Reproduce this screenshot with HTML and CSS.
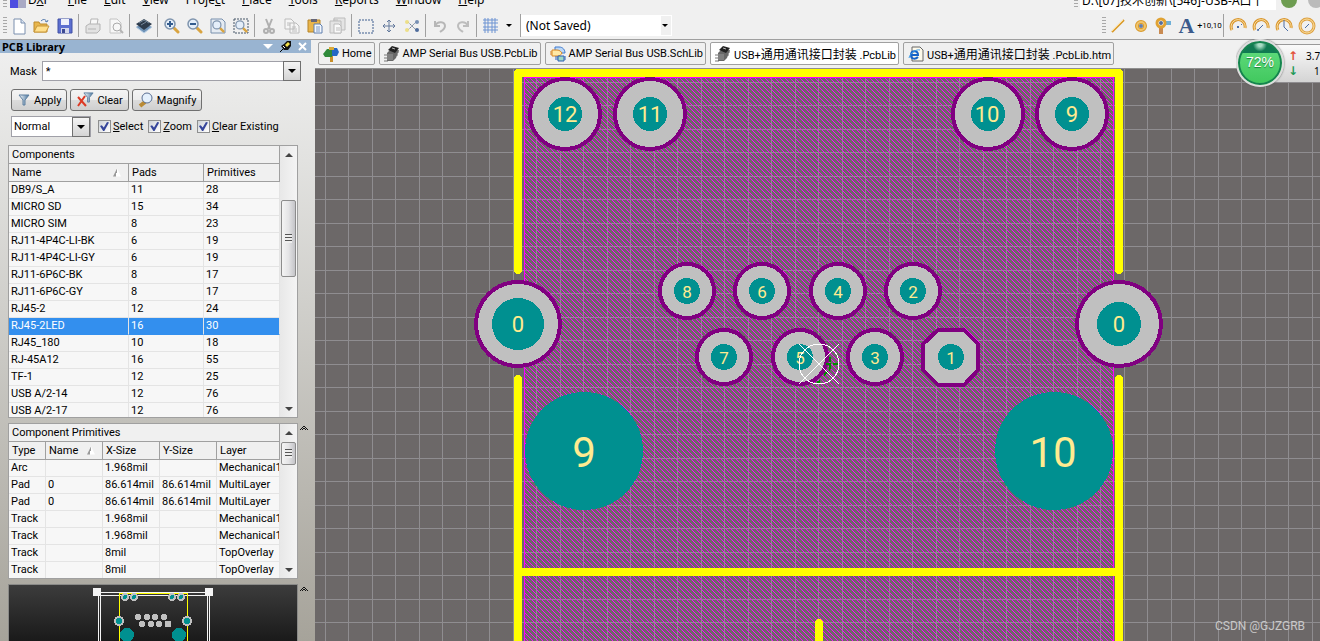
FILE: index.html
```html
<!DOCTYPE html>
<html lang="en">
  <head>
    <meta charset="UTF-8" />
    <meta name="viewport" content="width=device-width, initial-scale=1.0" />
    <title>PCB Library</title>
    <link rel="stylesheet" href="styles.css">
  </head>
  <body>
    <!-- shared icons -->
    <svg class="defs" width="0" height="0" aria-hidden="true">
      <defs>
        <linearGradient id="funnelFill"><stop offset="0" stop-color="#fff"/><stop offset="1" stop-color="#42719c"/></linearGradient>
        <symbol id="chip" viewBox="0 0 16 16">
          <path d="M0 9h4M0 12h4M0 15h4M12 6h3M11 9h3" stroke="#777" stroke-width="1"/>
          <path d="M3 7l4-4 8 1-3 8-3 3H3z" fill="#686868"/>
          <path d="M4 4l4-4 7 2-4 5z" fill="#222"/>
          <path d="M3 8h6v6H3z" fill="#808080"/>
          <path d="M8 2l3 1" stroke="#bbb"/>
        </symbol>
        <symbol id="lens" viewBox="0 0 16 16">
          <path d="M9 9l5 5" stroke="#d9a441" stroke-width="3" stroke-linecap="round"/>
          <circle cx="6" cy="6" r="5" fill="#e4eef9" stroke="#7f94ad" stroke-width="1.5"/>
        </symbol>
        <symbol id="funnel" viewBox="0 0 12 12">
          <path d="M1 1h10L7 6v5H5V6z" fill="url(#funnelFill)" stroke="#5d7f9f"/>
        </symbol>
        <symbol id="arc" viewBox="0 0 18 18">
          <path d="M3 13A7 7 0 1 1 16 11" fill="none" stroke="#d9962f" stroke-width="3"/>
          <path d="M3 13A7 7 0 1 1 16 11" fill="none" stroke="#fce0a0" stroke-width="1"/>
        </symbol>
      </defs>
    </svg>

    <header>
      <nav class="menu">
        <span class="grip"></span>
        <svg class="logo" width="16" height="16"><path d="M0 0h8v16H0z" fill="#4d4de0"/><path d="M8 0h8v16H8z" fill="#a9a9c4"/></svg>
        <a href="#">D<u>X</u>P</a>
        <a href="#"><u>F</u>ile</a>
        <a href="#"><u>E</u>dit</a>
        <a href="#"><u>V</u>iew</a>
        <a href="#">Proje<u>c</u>t</a>
        <a href="#"><u>P</u>lace</a>
        <a href="#"><u>T</u>ools</a>
        <a href="#"><u>R</u>eports</a>
        <a href="#"><u>W</u>indow</a>
        <a href="#"><u>H</u>elp</a>
        <span class="grip right"></span>
        <input class="path" type="text" aria-label="Path" value="D:\[07]技术创新\[546]-USB-A口十">
        <span class="round green"></span>
        <span class="round"></span>
      </nav>

      <div class="toolbar">
        <span class="grip"></span>
        <button aria-label="New"><svg width="16" height="18"><path d="M3 2h7l4 4v11H3z" fill="#fff" stroke="#7b8fae"/><path d="M10 2v4h4" fill="#dbe5f2" stroke="#7b8fae"/></svg></button>
        <button aria-label="Open"><svg width="17" height="16"><path d="M1 14V4h5l1 2h7v8z" fill="#e8b64c" stroke="#bd8a2c"/><path d="M1 14l3-6h12l-3 6z" fill="#ffdf8c" stroke="#c8973a"/><path d="M8 3c3-3 5-1 6 1l1-2M14 4l-2-1" fill="none" stroke="#5d80b0"/></svg></button>
        <button aria-label="Save"><svg width="16" height="16"><path d="M1 1h14v14H1z" fill="#5c6fd0" stroke="#4050a4"/><path d="M4 1h8v6H4z" fill="#eef1fb"/><path d="M4 10h8v5H4z" fill="#d4d8ec"/><path d="M5 11h3v4H5z" fill="#3c4a94"/></svg></button>
        <span class="sep"></span>
        <button aria-label="Print"><svg width="16" height="16" stroke="#b4b4b4" fill="#e2e2e2"><path d="M5 7l1-6h7l-1 6z" fill="#f8f8f8"/><path d="M1 8l3-2h11v6l-3 3H1z"/><path d="M3 11h8" /></svg></button>
        <button aria-label="Preview"><svg width="16" height="16" fill="#f7f7f7" stroke="#c4c4c4"><path d="M2 1h7l4 4v10H2z"/><circle cx="9" cy="9" r="4" stroke="#aaa"/><path d="M12 12l3 3" stroke="#b4b4b4" stroke-width="2"/></svg></button>
        <span class="sep"></span>
        <button aria-label="Layers"><svg width="18" height="16"><path d="M1 9l8 6 8-6-8-4z" fill="#6f93b8"/><path d="M1 6l8 6 8-6-8-5z" fill="#2d3b4c"/><path d="M4 5l5-3 5 3M6 7l5-3" fill="none" stroke="#75889c"/><path d="M1 9l8 6 8-6" fill="none" stroke="#b9cfe4"/></svg></button>
        <span class="sep"></span>
        <button aria-label="Zoom in"><svg width="16" height="16"><use href="#lens"/><path d="M3 6h6M6 3v6" stroke="#335c8e" stroke-width="2"/></svg></button>
        <button aria-label="Zoom out"><svg width="16" height="16"><use href="#lens"/><path d="M3 6h6" stroke="#335c8e" stroke-width="2"/></svg></button>
        <button aria-label="Fit document"><svg width="16" height="16"><path d="M1 1h11l3 3v11H1z" fill="#e5ebf2" stroke="#7890ad"/><use href="#lens" x="2" y="2" width="13" height="13"/></svg></button>
        <button aria-label="Zoom area"><svg width="16" height="16"><path d="M1 1h14v14H1z" fill="none" stroke="#456" stroke-dasharray="2 1"/><use href="#lens" x="2" y="2" width="13" height="13"/></svg></button>
        <span class="sep"></span>
        <button aria-label="Cut"><svg width="16" height="16" fill="none" stroke="#b0b0b0" stroke-width="2"><path d="M5 1l4 10M11 1L7 11"/><circle cx="5" cy="13" r="2"/><circle cx="11" cy="13" r="2"/></svg></button>
        <button aria-label="Copy"><svg width="16" height="16" fill="#f5f5f5" stroke="#bcbcbc"><path d="M1 1h6l3 3v7H1zM6 5h6l3 3v7H6z"/><path d="M8 9h4M8 11h5M8 13h5M3 5h3M3 7h3"/></svg></button>
        <button aria-label="Paste"><svg width="16" height="16"><path d="M1 2h12v12H1z" fill="#e9b54b" stroke="#b58329"/><path d="M4 1h6v3H4z" fill="#667"/><path d="M7 6h6l2 2v7H7z" fill="#f3f7fd" stroke="#5e7fae"/><path d="M9 9h4M9 11h4M9 13h4" stroke="#7c9ac5"/></svg></button>
        <button aria-label="Rubber stamp"><svg width="17" height="17" fill="#e4e4e4" stroke="#bcbcbc"><path d="M5 1h11v12H5z"/><path d="M1 4h11v12H1z"/><path d="M5 7h5l2 2v7H5z" fill="#fafafa"/><path d="M4 3h5M7 11h4M7 13h4"/></svg></button>
        <span class="sep"></span>
        <button aria-label="Select area"><svg width="16" height="16"><path d="M1 2h14v13H1z" fill="none" stroke="#3f5f8f" stroke-dasharray="2 1"/></svg></button>
        <button aria-label="Move"><svg width="14" height="14" fill="none" stroke="#647a9d"><path d="M7 1v12M1 7h12M5 3l2-2 2 2M5 11l2 2 2-2M3 5L1 7l2 2M11 5l2 2-2 2"/></svg></button>
        <button aria-label="Deselect"><svg width="16" height="14"><path d="M4 3l8 8M4 11l8-8" stroke="#68778f" stroke-dasharray="2 1"/><circle cx="3" cy="3" r="2" fill="#eddf88"/><circle cx="3" cy="11" r="2" fill="#eddf88"/><circle cx="13" cy="3" r="2" fill="#7890b4"/><circle cx="13" cy="11" r="2" fill="#4e6c9c"/></svg></button>
        <span class="sep"></span>
        <button aria-label="Undo"><svg width="14" height="14" fill="none" stroke="#b7b7b7" stroke-width="2"><path d="M2 2v5h5M2 7c3-6 10-4 10 0 0 3-2 4-5 6"/></svg></button>
        <button aria-label="Redo"><svg width="14" height="14" fill="none" stroke="#bdbdbd" stroke-width="2"><path d="M12 2v5H7M12 7C9 1 2 3 2 7c0 3 2 4 5 6"/></svg></button>
        <span class="sep"></span>
        <button aria-label="Grid"><svg width="15" height="15" stroke="#6d93d2"><path d="M2 0v15M5 0v15M9 0v15M12 0v15M0 2h15M0 5h15M0 9h15M0 12h15"/></svg></button>
        <span class="caret"></span>
        <span class="sep wide"></span>
        <span class="saved"><select aria-label="Saved view"><option>(Not Saved)</option></select><span class="caret"></span></span>

        <span class="grip right"></span>
        <button aria-label="Line"><svg width="14" height="14"><path d="M1 13L13 1" stroke="#d99a2b" stroke-width="2"/><path d="M1 12L12 1" stroke="#ffe09a"/></svg></button>
        <button aria-label="Pad"><svg width="14" height="14"><circle cx="7" cy="7" r="4" fill="#fff" stroke="#d99a2b" stroke-width="4"/><circle cx="7" cy="7" r="4" fill="none" stroke="#f0c46c" stroke-width="2"/><circle cx="7" cy="7" r="2" fill="#667eaa"/></svg></button>
        <button aria-label="Via"><svg width="17" height="18"><path d="M8 6h8" stroke="#6fb0d8" stroke-width="4"/><path d="M6 10v7" stroke="#c98b52" stroke-width="4"/><circle cx="6" cy="6" r="4" fill="#fff" stroke="#e0a233" stroke-width="3"/><circle cx="6" cy="6" r="2" fill="#556d99"/></svg></button>
        <button class="letter" aria-label="String">A</button>
        <button class="coord" aria-label="Coordinate">+<sup>10,10</sup></button>
        <span class="sep"></span>
        <button aria-label="Arc by centre"><svg width="18" height="18"><use href="#arc"/><path d="M8 9h2v2H8zM12 7h1v1h-1z" fill="#4b6da5"/></svg></button>
        <button aria-label="Arc by edge"><svg width="18" height="18"><use href="#arc"/><path d="M6 13l5-5" stroke="#4b6da5"/><circle cx="6" cy="13" r="1" fill="#4b6da5"/></svg></button>
        <button aria-label="Arc any angle"><svg width="18" height="18"><use href="#arc"/><path d="M9 3v7l4 4" fill="none" stroke="#4b6da5"/></svg></button>
        <button aria-label="Full circle"><svg width="18" height="18"><circle cx="9" cy="9" r="7" fill="none" stroke="#dda040" stroke-width="3"/><circle cx="9" cy="9" r="7" fill="none" stroke="#fce0a0"/><path d="M7 11l4-4" stroke="#4b6da5"/></svg></button>
      </div>
    </header>

    <div class="workspace">
      <aside>
        <div class="panelTitle">
          <h1>PCB Library</h1>
          <button aria-label="Menu"><svg width="10" height="6"><path d="M0 0h10L5 5z" fill="#fff"/></svg></button>
          <button aria-label="Pin"><svg width="11" height="11"><path d="M0 11l4-4" stroke="#000"/><path d="M1 5l3-2 3-3h4v5L8 9H4z" fill="#111"/><path d="M5 4l3-3 2 2-3 3z" fill="#f4e14d"/><path d="M3 5l2 2" stroke="#fff"/></svg></button>
          <button aria-label="Close"><svg width="9" height="9"><path d="M1 1l7 7M8 1L1 8" stroke="#fff" stroke-width="2"/></svg></button>
        </div>

        <div class="controls">
          <div class="mask">
            <label for="mask">Mask</label>
            <input id="mask" type="text" value="*">
            <button class="drop" aria-label="Masks"><span class="caret"></span></button>
          </div>
          <div class="buttons">
            <button><svg width="14" height="14"><use href="#funnel" x="1" y="1" width="12" height="12"/></svg>Apply</button>
            <button><svg width="18" height="16"><use href="#funnel" x="7" y="0" width="11" height="11"/><path d="M2 5l8 9M9 4L2 14" stroke="#dc3a25" stroke-width="2"/></svg>Clear</button>
            <button><svg width="16" height="16"><path d="M7 10l-5 4" stroke="#b98a35" stroke-width="4"/><circle cx="9" cy="6" r="5" fill="#e4f0fc" stroke="#5b6f92"/></svg>Magnify</button>
          </div>
          <div class="options">
            <span class="mode"><select aria-label="Mode"><option>Normal</option></select><span class="drop"><span class="caret"></span></span></span>
            <label><input type="checkbox" checked><span><u>S</u>elect</span></label>
            <label><input type="checkbox" checked><span><u>Z</u>oom</span></label>
            <label><input type="checkbox" checked><span><u>C</u>lear Existing</span></label>
          </div>
        </div>

        <section class="list components">
          <div class="listBody">
            <table>
              <caption>Components</caption>
              <colgroup><col class="c120"><col class="c75"><col></colgroup>
              <thead><tr><th><span class="sort">Name <i></i></span></th><th>Pads</th><th>Primitives</th></tr></thead>
              <tbody>
                <tr><td>DB9/S_A</td><td>11</td><td>28</td></tr>
                <tr><td>MICRO SD</td><td>15</td><td>34</td></tr>
                <tr><td>MICRO SIM</td><td>8</td><td>23</td></tr>
                <tr><td>RJ11-4P4C-LI-BK</td><td>6</td><td>19</td></tr>
                <tr><td>RJ11-4P4C-LI-GY</td><td>6</td><td>19</td></tr>
                <tr><td>RJ11-6P6C-BK</td><td>8</td><td>17</td></tr>
                <tr><td>RJ11-6P6C-GY</td><td>8</td><td>17</td></tr>
                <tr><td>RJ45-2</td><td>12</td><td>24</td></tr>
                <tr class="selected"><td>RJ45-2LED</td><td>16</td><td>30</td></tr>
                <tr><td>RJ45_180</td><td>10</td><td>18</td></tr>
                <tr><td>RJ-45A12</td><td>16</td><td>55</td></tr>
                <tr><td>TF-1</td><td>12</td><td>25</td></tr>
                <tr><td>USB A/2-14</td><td>12</td><td>76</td></tr>
                <tr><td>USB A/2-17</td><td>12</td><td>76</td></tr>
              </tbody>
            </table>
          </div>
          <div class="scroll">
            <span class="up"></span>
            <span class="thumb"></span>
            <span class="down"></span>
          </div>
        </section>

        <div class="row">
          <section class="list primitives">
            <div class="listBody">
              <table>
                <caption>Component Primitives</caption>
                <colgroup><col class="c37"><col class="c57"><col class="c57"><col class="c57"><col></colgroup>
                <thead><tr><th>Type</th><th><span class="sort">Name <i></i></span></th><th>X-Size</th><th>Y-Size</th><th>Layer</th></tr></thead>
                <tbody>
                  <tr><td>Arc</td><td></td><td>1.968mil</td><td></td><td>Mechanical1</td></tr>
                  <tr><td>Pad</td><td>0</td><td>86.614mil</td><td>86.614mil</td><td>MultiLayer</td></tr>
                  <tr><td>Pad</td><td>0</td><td>86.614mil</td><td>86.614mil</td><td>MultiLayer</td></tr>
                  <tr><td>Track</td><td></td><td>1.968mil</td><td></td><td>Mechanical1</td></tr>
                  <tr><td>Track</td><td></td><td>1.968mil</td><td></td><td>Mechanical1</td></tr>
                  <tr><td>Track</td><td></td><td>8mil</td><td></td><td>TopOverlay</td></tr>
                  <tr><td>Track</td><td></td><td>8mil</td><td></td><td>TopOverlay</td></tr>
                </tbody>
              </table>
            </div>
            <div class="scroll">
              <span class="up"></span>
              <span class="thumb"></span>
              <span class="down"></span>
            </div>
          </section>
          <svg class="fold" width="9" height="6"><path d="M0 5l4-4 4 4M2 5l2-2 2 2" fill="none" stroke="#111"/></svg>
        </div>

        <div class="row grow">
          <div class="preview">
            <svg width="288" height="56" viewBox="9 585 288 56" shape-rendering="crispEdges">
              <path d="M98 593h1v48h-1zM100 595h1v46h-1zM207 595h1v46h-1zM209 593h1v48h-1zM98 592h112v1H98zM100 595h108v1H100z" fill="#f4f4f4"/>
              <path d="M93 588h8v8h-8zM205 588h8v8h-8z" fill="#f4f4f4"/>
              <path d="M119 593h69v1h-69zM119 594h1v47h-1zM187 594h1v47h-1z" fill="#ff0"/>
              <g fill="#009090" stroke="#c0c0c0" stroke-width="2">
                <circle cx="125" cy="597" r="3"/><circle cx="134" cy="597" r="3"/>
                <circle cx="172" cy="597" r="3"/><circle cx="181" cy="597" r="3"/>
                <circle cx="119" cy="621" r="4"/><circle cx="187" cy="621" r="4"/>
              </g>
              <g fill="#c0c0c0">
                <circle cx="138" cy="617" r="3"/><circle cx="147" cy="617" r="3"/><circle cx="155" cy="617" r="3"/><circle cx="164" cy="617" r="3"/>
                <circle cx="142" cy="624" r="3"/><circle cx="151" cy="624" r="3"/><circle cx="159" cy="624" r="3"/><path d="M165 621h6v6h-6z"/>
              </g>
              <circle cx="127" cy="635" r="7" fill="#009090"/><circle cx="179" cy="635" r="7" fill="#009090"/>
            </svg>
          </div>
          <svg class="fold" width="9" height="6"><path d="M0 5l4-4 4 4M2 5l2-2 2 2" fill="none" stroke="#111"/></svg>
        </div>
      </aside>

      <main>
        <nav class="tabs">
          <a href="#"><svg width="16" height="16"><path d="M7 3h3v13H7z" fill="#c98f28"/><path d="M7 2h7l2 4-2 4H8z" fill="#2467c4"/><path d="M0 8l4-5h5v8H2z" fill="#2f8a3b"/><path d="M6 1h5v3H6z" fill="#d9a93a"/></svg>Home</a>
          <a href="#"><svg width="16" height="16"><use href="#chip"/></svg>AMP Serial Bus USB.PcbLib</a>
          <a href="#"><svg width="16" height="16"><path d="M5 1h4c4 0 6 3 6 6H5z" fill="#bcd8f6" stroke="#3c78cf"/><path d="M2 4h5c3 0 4 2 5 3-1 2-2 3-5 3H2z" fill="#ffe9a6" stroke="#d98723"/><path d="M0 6h2M0 8h2" stroke="#d98723"/><path d="M8 10h6v5H8z" fill="#9ed8c4" stroke="#2b5fb4"/><path d="M5 11h3M5 13h3M14 11h2M14 13h2" stroke="#2b5fb4"/></svg>AMP Serial Bus USB.SchLib</a>
          <a href="#" class="active"><svg width="16" height="16"><use href="#chip"/></svg><span>USB+<b>通用通讯接口封装</b> .PcbLib</span></a>
          <a href="#"><svg width="16" height="16"><path d="M4 1h8l3 3v11H4z" fill="#fdf9ea" stroke="#666"/><path d="M3 9h7c0-5-7-5-7 0s5 4 7 2" fill="none" stroke="#1763c8" stroke-width="2"/><path d="M1 12C2 7 8 3 12 4" fill="none" stroke="#3d9be8"/></svg><span>USB+<b>通用通讯接口封装</b> .PcbLib.htm</span></a>
        </nav>

        <svg class="board" viewBox="315 69 1005 572" preserveAspectRatio="xMinYMin slice" shape-rendering="crispEdges">
          <defs>
            <pattern id="grid" x="818" y="364" width="47" height="47" patternUnits="userSpaceOnUse">
              <path d="M0 0h1v47H0zM24 0h1v47h-1zM0 0h47v1H0zM0 23h47v1H0z" fill="#8f8d90"/>
            </pattern>
            <pattern id="hatch" x="524" y="77" width="5" height="5" patternUnits="userSpaceOnUse">
              <path d="M0 0h1v1H0zM1 1h1v1H1zM2 2h1v1H2zM3 3h1v1H3zM4 4h1v1H4z" fill="#f0f"/>
            </pattern>
          </defs>
          <rect x="315" y="69" width="1005" height="572" fill="#6c6868"/>
          <rect x="315" y="69" width="1005" height="572" fill="url(#grid)"/>
          <rect x="524" y="77" width="590" height="564" fill="url(#hatch)"/>
          <path d="M524 77h590v1H524zM524 78h1v563h-1zM1113 78h1v563h-1z" fill="#f0f"/>

          <!-- overlay tracks -->
          <g fill="none" stroke="#ff0" stroke-width="8" stroke-linecap="round" stroke-linejoin="round">
            <path d="M518 270V73H1119V270"/>
            <path d="M518 650V379M1119 650V379M518 572H1119M819 650V623"/>
          </g>

          <!-- pads -->
          <g fill="#c0c0c0" stroke="#800080" stroke-width="4">
            <circle cx="565" cy="114" r="35"/><circle cx="650" cy="114" r="35"/><circle cx="988" cy="114" r="35"/><circle cx="1072" cy="114" r="35"/>
            <circle cx="518" cy="324" r="42"/><circle cx="1119" cy="324" r="42"/>
            <circle cx="687" cy="291" r="27"/><circle cx="762" cy="291" r="27"/><circle cx="838" cy="291" r="27"/><circle cx="913" cy="291" r="27"/>
            <circle cx="724" cy="357" r="27"/><circle cx="800" cy="357" r="27"/><circle cx="875" cy="357" r="27"/>
            <path d="M938 330h26l14 14v26l-14 15h-26l-15-15v-26z"/>
          </g>
          <g fill="#009090">
            <circle cx="565" cy="114" r="17"/><circle cx="650" cy="114" r="17"/><circle cx="988" cy="114" r="17"/><circle cx="1072" cy="114" r="17"/>
            <circle cx="518" cy="324" r="26"/><circle cx="1119" cy="324" r="22"/>
            <circle cx="687" cy="291" r="13"/><circle cx="762" cy="291" r="13"/><circle cx="838" cy="291" r="13"/><circle cx="913" cy="291" r="13"/>
            <circle cx="724" cy="357" r="13"/><circle cx="800" cy="357" r="13"/><circle cx="875" cy="357" r="13"/><circle cx="951" cy="357" r="13"/>
            <circle cx="584" cy="451" r="59"/><circle cx="1054" cy="451" r="59"/>
          </g>
          <g class="medium">
            <text x="565" y="122">12</text><text x="650" y="122">11</text><text x="987" y="122">10</text><text x="1072" y="122">9</text>
            <text x="518" y="332">0</text><text x="1119" y="332">0</text>
          </g>
          <g class="small">
            <text x="687" y="298">8</text><text x="762" y="298">6</text><text x="838" y="298">4</text><text x="913" y="298">2</text>
            <text x="724" y="364">7</text><text x="800" y="364">5</text><text x="875" y="364">3</text><text x="951" y="364">1</text>
          </g>
          <g class="large">
            <text x="584" y="467">9</text><text x="1053" y="467">10</text>
          </g>

          <!-- origin marker -->
          <path d="M826 364h12M830 357v13M824 375l6-5M817 383l3-2" stroke="#080" stroke-width="2" stroke-dasharray="5 2" fill="none"/>
          <g fill="none" stroke="#fff">
            <circle cx="819" cy="364" r="20"/>
            <path d="M799 344l40 40M839 344l-40 40"/>
          </g>
        </svg>
        <p class="watermark">CSDN @GJZGRB</p>
      </main>
    </div>

    <!-- floating network monitor -->
    <div class="monitor">
      <div class="speeds">
        <span class="rise">↑</span><span>3.7</span>
        <span class="fall">↓</span><span class="slow">1</span>
      </div>
      <div class="ball">72%</div>
    </div>
  </body>
</html>
```
FILE: styles.css
```css
* {
  box-sizing: border-box;
}
body {
  margin: 0;
  height: 100vh;
  overflow: hidden;
  display: flex;
  flex-direction: column;
  background: #f0f0f0;
  color: #000;
  font-family: Roboto, "Liberation Sans", sans-serif;
  font-size: 11px;
}
button,
input,
select {
  font: inherit;
  color: inherit;
  margin: 0;
}
a {
  color: inherit;
  text-decoration: none;
}
button {
  padding: 0;
  border: 0;
  background: none;
}
svg {
  flex: none;
}
.defs {
  position: absolute;
}

/* menu and toolbar */
header {
  border-bottom: 1px solid #a0a0a0;
}
.menu,
.toolbar {
  display: flex;
  align-items: center;
}
.menu {
  height: 28px;
  margin-top: -16px;
  padding: 4px 0 0 3px;
  gap: 17px;
  font-family: "Noto Sans", "Noto Sans CJK SC", sans-serif;
  font-size: 12px;
  line-height: 16px;
}
.logo {
  margin: 0 -15px 0 -14px;
}
.grip {
  width: 4px;
  height: 18px;
  background: repeating-linear-gradient(#a8a8a8 0 1px, #f0f0f0 1px 3px);
}
.grip.right {
  margin-left: auto;
}
.path {
  width: 196px;
  height: 20px;
  margin-left: -15px;
  padding: 0 2px;
  border: 0;
  background: #fff;
}
.round {
  width: 16px;
  height: 16px;
  margin-right: -6px;
  border-radius: 50%;
  background: #bbb;
}
.round.green {
  margin-left: -12px;
  background: #6d9c50;
}
.round:last-child {
  margin-right: -4px;
}
.toolbar {
  height: 27px;
  padding: 0 2px 0 3px;
}
.toolbar button {
  width: 23px;
  height: 22px;
  display: flex;
  align-items: center;
  justify-content: center;
}
.sep {
  width: 1px;
  height: 23px;
  margin: 0 2px;
  background: #a0a0a0;
}
.caret {
  width: 0;
  border: 3px solid transparent;
  border-top-color: #000;
  border-bottom-width: 0;
}
.toolbar > .caret {
  margin-left: 4px;
}
.sep.wide {
  margin: 0 0 0 8px;
}
.saved {
  display: flex;
  align-items: center;
  width: 151px;
  height: 21px;
  background: linear-gradient(90deg, #fff 139px, #f0f0f0 139px);
  border: 1px solid #fff;
  font-family: "Noto Sans", sans-serif;
  font-size: 12px;
}
.saved select,
.mode select {
  appearance: none;
  flex: 1;
  min-width: 0;
  height: 100%;
  padding: 0 4px;
  border: 0;
  background: transparent;
}
.saved .caret {
  margin-right: 3px;
}
.toolbar .letter {
  color: #3b5b8c;
  font: bold 22px "Liberation Serif", serif;
}
.toolbar .coord {
  font-size: 9px;
}
.coord sup {
  font-size: 8px;
}

/* library panel */
.workspace {
  flex: 1;
  min-height: 0;
  display: flex;
}
aside {
  width: 315px;
  flex: none;
  display: flex;
  flex-direction: column;
  background: linear-gradient(#f0f0f0, #e2e2e0 20%, #a6a39a);
}
.panelTitle {
  display: flex;
  align-items: center;
  gap: 7px;
  height: 13px;
  margin-right: 4px;
  padding: 0 4px 0 2px;
  background: #99b4d1;
}
.panelTitle h1 {
  flex: 1;
  margin: 0;
  font: bold 11px/13px "Noto Sans", sans-serif;
}
.panelTitle button {
  display: flex;
}
.controls {
  display: flex;
  flex-direction: column;
  padding: 8px 14px 8px 10px;
}
.mask,
.buttons,
.options {
  display: flex;
  align-items: center;
}
.mask input {
  flex: 1;
  min-width: 0;
  height: 20px;
  margin-left: 5px;
  padding: 0 3px;
  border: 1px solid #a0a0a8;
  border-right: 0;
  background: #fff;
}
.drop,
.mask .drop {
  display: flex;
  align-items: center;
  justify-content: center;
  width: 18px;
  height: 20px;
  border: 1px solid #707070;
  background: linear-gradient(#f4f4f4, #d4d4d4);
}
.drop .caret {
  border-width: 4px 4px 0;
}
.buttons {
  gap: 3px;
  margin: 8px 0 5px 1px;
}
.buttons button {
  display: flex;
  align-items: center;
  gap: 3px;
  height: 22px;
  padding: 0 5px;
  border: 1px solid #707070;
  border-radius: 3px;
  background: linear-gradient(#f4f4f4, #ececec 50%, #dcdcdc 50%, #cfcfcf);
}
.options {
  height: 21px;
  gap: 5px;
}
.mode {
  display: flex;
  align-items: center;
  width: 80px;
  height: 21px;
  margin: 0 2px 0 1px;
  border: 1px solid #a0a0a8;
  background: #fff;
}
.mode select {
  padding: 0 2px;
}
.options label {
  display: flex;
  align-items: center;
  gap: 2px;
  white-space: nowrap;
}
.options input {
  appearance: none;
  width: 13px;
  height: 13px;
  border: 1px solid #8e8f8f;
  background: linear-gradient(135deg, #cfd3d8, #fff);
}
.options input:checked::before {
  content: "";
  display: block;
  width: 9px;
  height: 9px;
  margin: 1px;
  background: #35459b;
  clip-path: polygon(0 45%, 20% 35%, 42% 62%, 78% 0, 100% 5%, 48% 100%, 35% 100%);
}

/* lists */
.list {
  display: flex;
  width: 290px;
  border: 1px solid #a0a0a0;
  background: #f7f7f7;
  overflow: hidden;
}
.components {
  height: 273px;
  margin: 0 0 5px 8px;
}
.primitives {
  height: 156px;
}
.listBody {
  flex: 1;
  min-width: 0;
}
table {
  width: 100%;
  table-layout: fixed;
  border-collapse: separate;
  border-spacing: 0;
}
caption {
  height: 18px;
  padding: 0 3px;
  background: #f0f0f0;
  border-right: 1px solid #a0a0a0;
  border-bottom: 1px solid #a0a0a0;
  line-height: 17px;
  text-align: left;
}
.c120 {
  width: 120px;
}
.c75 {
  width: 75px;
}
.c37 {
  width: 37px;
}
.c57 {
  width: 57px;
}
th,
td {
  padding: 0 0 0 2px;
  text-align: left;
  font-weight: normal;
  white-space: nowrap;
  overflow: hidden;
}
th {
  height: 18px;
  padding: 0 3px;
  border-right: 1px solid #a0a0a0;
  border-bottom: 1px solid #a0a0a0;
  background: #f0f0f0;
  line-height: 17px;
}
td {
  height: 17px;
  border-right: 1px solid #e4e4e4;
  border-bottom: 1px solid #e4e4e4;
  line-height: 16px;
}
.sort {
  display: flex;
  align-items: center;
  justify-content: space-between;
}
.sort i {
  width: 8px;
  height: 8px;
  margin-right: 4px;
  background: linear-gradient(105deg, #999 45%, #fff 45%);
  clip-path: polygon(50% 0, 100% 100%, 0 100%);
}
.selected td {
  background: #338fee;
  border-bottom-color: #338fee;
  color: #fff;
}
.scroll {
  display: flex;
  flex-direction: column;
  align-items: center;
  width: 17px;
  background: linear-gradient(90deg, #e8e8e8, #f4f4f4);
}
.up,
.down {
  width: 0;
  border: 4px solid transparent;
}
.up {
  margin: 7px 0;
  border-top: 0;
  border-bottom-color: #444;
}
.down {
  margin: auto 0 6px;
  border-bottom: 0;
  border-top-color: #444;
}
.thumb {
  display: flex;
  align-items: center;
  justify-content: center;
  width: 15px;
  height: 77px;
  margin-top: 36px;
  border: 1px solid #8c8c8c;
  border-radius: 2px;
  background: linear-gradient(90deg, #f4f4f4, #e4e4e6 50%, #c4c4c8);
}
.thumb::before {
  content: "";
  width: 7px;
  height: 9px;
  background: repeating-linear-gradient(#555 0 1px, #eee 1px 3px);
}
.primitives .thumb {
  height: 23px;
  margin-top: 0;
}
.row {
  display: flex;
  gap: 2px;
  margin: 0 0 5px 8px;
}
.row.grow {
  flex: 1;
  min-height: 0;
  margin-bottom: 0;
}
.fold {
  margin-top: 2px;
}
.preview {
  width: 290px;
  border: 1px solid #8a8a88;
  border-bottom: 0;
  background: linear-gradient(#3c3c3c, #1a1a1a);
  overflow: hidden;
}
.preview svg {
  display: block;
}

/* documents */
main {
  position: relative;
  flex: 1;
  min-width: 0;
  display: flex;
  flex-direction: column;
}
.tabs {
  display: flex;
  gap: 4px;
  padding: 2px 3px 3px;
  border-bottom: 1px solid #8f8f8f;
}
.tabs a {
  display: flex;
  align-items: center;
  gap: 3px;
  height: 23px;
  padding: 0 2px 0 4px;
  border: 1px solid #a0a0a0;
  border-radius: 2px;
  white-space: nowrap;
}
.tabs b {
  font: 12px "Noto Sans CJK SC", sans-serif;
}
.tabs .active {
  background: #fff;
}
.board {
  flex: 1;
  display: block;
  width: 100%;
  min-height: 0;
}
.board text {
  fill: #ffeb90;
  text-anchor: middle;
}
.small {
  font-size: 17px;
}
.medium {
  font-size: 22px;
}
.large {
  font-size: 42px;
}
.watermark {
  position: absolute;
  right: 15px;
  bottom: 8px;
  margin: 0;
  color: #c9c8c8;
  font-size: 12px;
  line-height: 14px;
}

/* network monitor */
.monitor {
  position: absolute;
  top: 39px;
  right: 0;
  width: 84px;
  height: 48px;
  display: flex;
  align-items: center;
  overflow: hidden;
}
.ball {
  position: absolute;
  left: 0;
  width: 48px;
  height: 48px;
  border: 2px solid #ddd;
  border-radius: 50%;
  background: radial-gradient(circle at 50% 8%, #a8dcc4 0 2px, transparent 7px), linear-gradient(#117a52 0 12px, #5bd878 12px, #3fc75c);
  box-shadow: inset 0 0 0 2px #16834f, 0 0 2px #555;
  color: #fff;
  font: 14px/42px "Liberation Sans", sans-serif;
  text-align: center;
  text-shadow: 0 1px 1px #1b7a3c;
}
.speeds {
  display: grid;
  grid-template-columns: 10px 1fr;
  column-gap: 8px;
  width: 60px;
  height: 38px;
  margin-left: 24px;
  padding: 4px 0 4px 28px;
  border-top: 1px solid #999;
  background: linear-gradient(#fafafa, #d4d4d4);
  font: 10px/15px "Noto Sans", sans-serif;
  white-space: nowrap;
}
.slow {
  padding-left: 8px;
}
.rise {
  color: #e2513b;
  font: bold 12px/15px "DejaVu Sans", sans-serif;
}
.fall {
  color: #1f9a58;
  font: bold 12px/15px "DejaVu Sans", sans-serif;
}
```
